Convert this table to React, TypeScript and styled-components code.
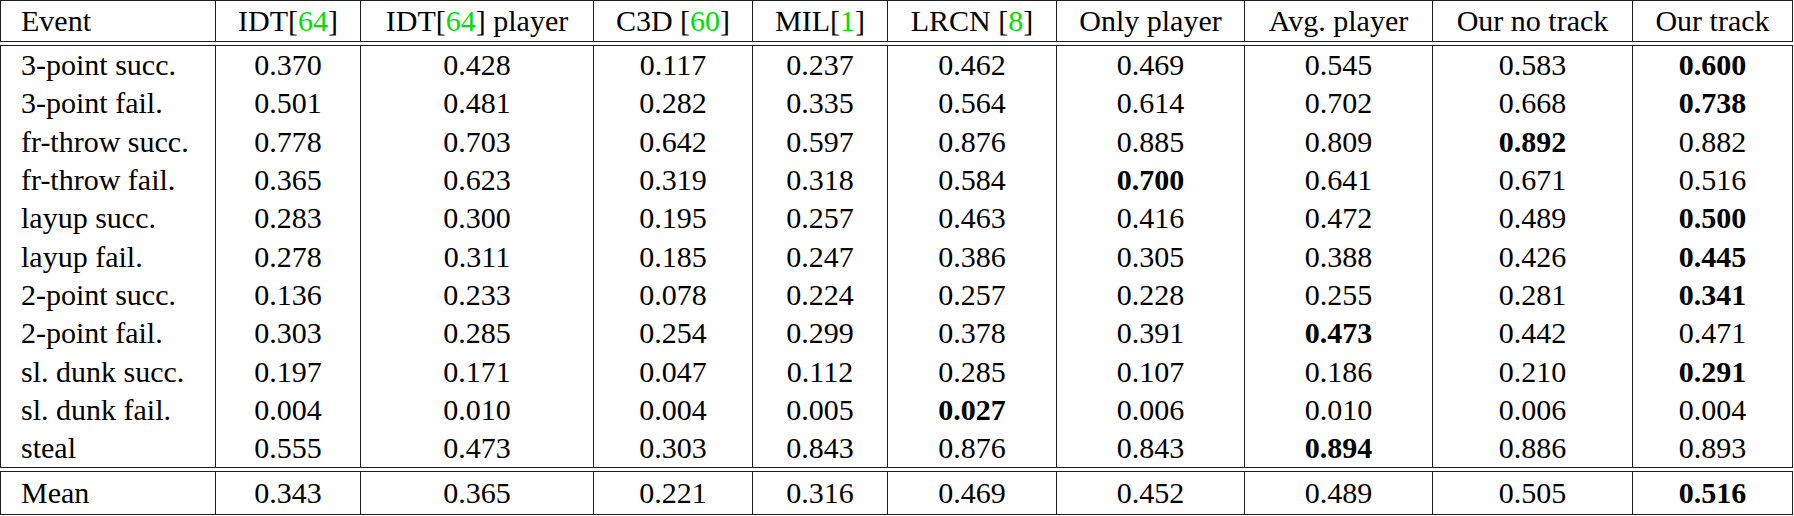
import React from "react";
import styled, { createGlobalStyle } from "styled-components";

const GlobalStyle = createGlobalStyle`
  html, body { margin: 0; padding: 0; background: #ffffff; }
  body { font-family: "Liberation Serif", "Times New Roman", serif; color: #000; }
`;

const COLS = "214px 145px 233px 159px 135px 169px 188px 188px 200px 160px";
const LINE = "#1e1e1e";

const Page = styled.div`
  display: flex;
  flex-direction: column;
  gap: 3px;
  width: 1793px;
`;

const Block = styled.div<{ $rowH: number }>`
  display: grid;
  grid-template-columns: ${COLS};
  grid-auto-rows: ${(p) => p.$rowH}px;
  border: 1px solid ${LINE};
`;

const Cell = styled.div<{ $first?: boolean; $bold?: boolean }>`
  box-sizing: border-box;
  display: flex;
  align-items: center;
  justify-content: ${(p) => (p.$first ? "flex-start" : "center")};
  padding-left: ${(p) => (p.$first ? "20px" : "0")};
  border-left: ${(p) => (p.$first ? "none" : `1px solid ${LINE}`)};
  font-size: 30px;
  font-weight: ${(p) => (p.$bold ? 700 : 400)};
  white-space: nowrap;
`;

const Cite = styled.span`
  color: #00e000;
`;

const headers: React.ReactNode[] = [
  "Event",
  <>IDT[<Cite>64</Cite>]</>,
  <>IDT[<Cite>64</Cite>] player</>,
  <>C3D [<Cite>60</Cite>]</>,
  <>MIL[<Cite>1</Cite>]</>,
  <>LRCN [<Cite>8</Cite>]</>,
  "Only player",
  "Avg. player",
  "Our no track",
  "Our track",
];

type Row = { name: string; vals: string[]; best: number };

const rows: Row[] = [
  { name: "3-point succ.", vals: ["0.370", "0.428", "0.117", "0.237", "0.462", "0.469", "0.545", "0.583", "0.600"], best: 8 },
  { name: "3-point fail.", vals: ["0.501", "0.481", "0.282", "0.335", "0.564", "0.614", "0.702", "0.668", "0.738"], best: 8 },
  { name: "fr-throw succ.", vals: ["0.778", "0.703", "0.642", "0.597", "0.876", "0.885", "0.809", "0.892", "0.882"], best: 7 },
  { name: "fr-throw fail.", vals: ["0.365", "0.623", "0.319", "0.318", "0.584", "0.700", "0.641", "0.671", "0.516"], best: 5 },
  { name: "layup succ.", vals: ["0.283", "0.300", "0.195", "0.257", "0.463", "0.416", "0.472", "0.489", "0.500"], best: 8 },
  { name: "layup fail.", vals: ["0.278", "0.311", "0.185", "0.247", "0.386", "0.305", "0.388", "0.426", "0.445"], best: 8 },
  { name: "2-point succ.", vals: ["0.136", "0.233", "0.078", "0.224", "0.257", "0.228", "0.255", "0.281", "0.341"], best: 8 },
  { name: "2-point fail.", vals: ["0.303", "0.285", "0.254", "0.299", "0.378", "0.391", "0.473", "0.442", "0.471"], best: 6 },
  { name: "sl. dunk succ.", vals: ["0.197", "0.171", "0.047", "0.112", "0.285", "0.107", "0.186", "0.210", "0.291"], best: 8 },
  { name: "sl. dunk fail.", vals: ["0.004", "0.010", "0.004", "0.005", "0.027", "0.006", "0.010", "0.006", "0.004"], best: 4 },
  { name: "steal", vals: ["0.555", "0.473", "0.303", "0.843", "0.876", "0.843", "0.894", "0.886", "0.893"], best: 6 },
];

const mean: Row = {
  name: "Mean",
  vals: ["0.343", "0.365", "0.221", "0.316", "0.469", "0.452", "0.489", "0.505", "0.516"],
  best: 8,
};

const DataRow = ({ row }: { row: Row }) => (
  <>
    <Cell $first>{row.name}</Cell>
    {row.vals.map((v, i) => (
      <Cell key={i} $bold={i === row.best}>
        {v}
      </Cell>
    ))}
  </>
);

export default function App() {
  return (
    <>
      <GlobalStyle />
      <Page>
        <Block $rowH={40}>
          {headers.map((h, i) => (
            <Cell key={i} $first={i === 0}>
              {h}
            </Cell>
          ))}
        </Block>
        <Block $rowH={38.3}>
          {rows.map((r) => (
            <DataRow key={r.name} row={r} />
          ))}
        </Block>
        <Block $rowH={42}>
          <DataRow row={mean} />
        </Block>
      </Page>
    </>
  );
}
